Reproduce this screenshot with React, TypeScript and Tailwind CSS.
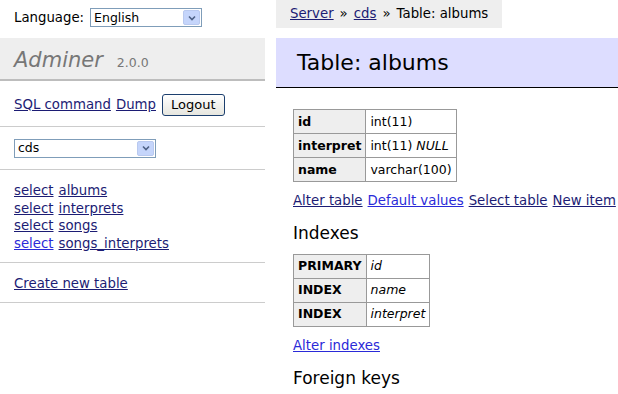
const font = { fontFamily: '"DejaVu Sans", Verdana, sans-serif' };

function Chevron() {
  return (
    <span className="flex h-full w-[17px] items-center justify-center rounded-[2px] border border-[#b9c9ef] bg-[#c5d5fb]">
      <svg width="8" height="6" viewBox="0 0 8 6">
        <path d="M1 1.5 L4 4.5 L7 1.5" fill="none" stroke="#4d6185" strokeWidth="1.6" />
      </svg>
    </span>
  );
}

function FakeSelect({ value, width }: { value: string; width: string }) {
  return (
    <div className={`flex h-[19px] items-center justify-between border border-[#7f9db9] bg-white p-[1px] pl-[3px] text-[12.5px] text-black ${width}`}>
      <span>{value}</span>
      <Chevron />
    </div>
  );
}

function Link({ children, visited = true }: { children: React.ReactNode; visited?: boolean }) {
  return <a className={`underline ${visited ? "text-[#1c1c74]" : "text-[#2a2ad8]"}`}>{children}</a>;
}

const fields = [
  ["id", "int(11)", false],
  ["interpret", "int(11)", true],
  ["name", "varchar(100)", false],
] as const;

const indexes = [
  ["PRIMARY", "id"],
  ["INDEX", "name"],
  ["INDEX", "interpret"],
];

export default function App() {
  return (
    <div className="flex h-[394px] w-[618px] overflow-hidden bg-white text-[13.3px] leading-[17.5px] text-black" style={font}>
      {/* menu */}
      <div className="flex w-[265px] shrink-0 flex-col">
        <div className="flex h-[38px] items-start gap-[6px] px-[14px] pt-[8px]">
          <span className="mt-[1px]">Language:</span>
          <FakeSelect value="English" width="w-[112px]" />
        </div>
        <div className="flex h-[43px] items-baseline gap-[14px] border-b-2 border-[#bdbdbd] bg-[#eeeeee] px-[14px] pt-[8px] text-[#777]">
          <span className="text-[21px] italic leading-[28px]">Adminer</span>
          <span className="text-[12.5px]">2.0.0</span>
        </div>
        <div className="flex h-[46px] items-center gap-[5px] border-b border-[#cccccc] px-[14px] pt-[2px]">
          <Link>SQL command</Link>
          <Link>Dump</Link>
          <button className="ml-[1px] h-[22px] rounded-[3px] border border-[#1c3f6e] bg-gradient-to-b from-white to-[#e6e6df] px-[8px] text-[13px] text-black">
            Logout
          </button>
        </div>
        <div className="flex h-[43px] items-center border-b border-[#cccccc] px-[14px]">
          <FakeSelect value="cds" width="w-[142px]" />
        </div>
        <div className="flex h-[93px] flex-col justify-center border-b border-[#cccccc] px-[14px] pt-[2px]">
          <div className="flex gap-[5px]"><Link>select</Link><Link>albums</Link></div>
          <div className="flex gap-[5px]"><Link>select</Link><Link>interprets</Link></div>
          <div className="flex gap-[5px]"><Link>select</Link><Link>songs</Link></div>
          <div className="flex gap-[5px]"><Link visited={false}>select</Link><Link>songs_interprets</Link></div>
        </div>
        <div className="flex h-[40px] items-center border-b border-[#cccccc] px-[14px] pt-[3px]">
          <Link>Create new table</Link>
        </div>
      </div>

      {/* content */}
      <div className="ml-[11px] flex min-w-0 flex-1 flex-col">
        <div className="flex h-[28px] w-fit items-center gap-[6px] whitespace-nowrap bg-[#eeeeee] px-[14px]">
          <Link>Server</Link>
          <span>»</span>
          <Link>cds</Link>
          <span>»</span>
          <span>Table: albums</span>
        </div>
        <div className="mt-[10px] flex h-[50px] items-center border-b border-black bg-[#ddddff] px-[21px] text-[22px]">
          Table: albums
        </div>

        <div className="flex flex-col pl-[17px]">
          <table className="mt-[21px] w-fit border-l border-t border-[#999] text-[12.5px]">
            <tbody>
              {fields.map(([n, t, nul]) => (
                <tr key={n} className="h-[24px]">
                  <th className="border-b border-r border-[#999] bg-[#eeeeee] px-[4px] text-left font-bold">{n}</th>
                  <td className="border-b border-r border-[#999] px-[4px]">
                    {t}
                    {nul && <i> NULL</i>}
                  </td>
                </tr>
              ))}
            </tbody>
          </table>
          <div className="mt-[10px] flex gap-[5px] whitespace-nowrap">
            <Link>Alter table</Link>
            <Link visited={false}>Default values</Link>
            <Link>Select table</Link>
            <Link>New item</Link>
          </div>
          <h3 className="mt-[12px] text-[17px] leading-[22px]">Indexes</h3>
          <table className="mt-[10px] w-fit border-l border-t border-[#999] text-[12.5px]">
            <tbody>
              {indexes.map(([k, c], i) => (
                <tr key={i} className="h-[24px]">
                  <th className="w-[72px] border-b border-r border-[#999] bg-[#eeeeee] px-[4px] text-left font-bold">{k}</th>
                  <td className="border-b border-r border-[#999] px-[4px] italic">{c}</td>
                </tr>
              ))}
            </tbody>
          </table>
          <div className="mt-[10px]">
            <Link visited={false}>Alter indexes</Link>
          </div>
          <h3 className="mt-[13px] text-[17px] leading-[22px]">Foreign keys</h3>
        </div>
      </div>
    </div>
  );
}
